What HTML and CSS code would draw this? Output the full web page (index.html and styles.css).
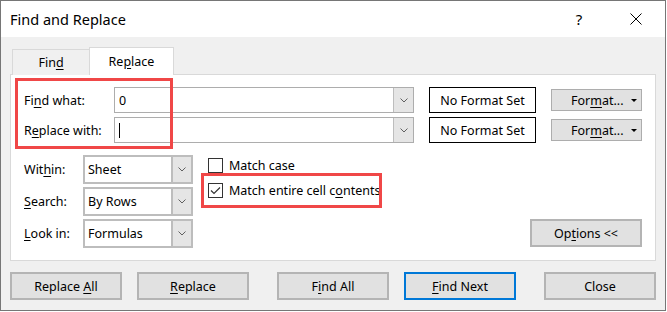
FILE: index.html
```html
<!DOCTYPE html>
<html>
<head>
<meta charset="utf-8">
<title>Find and Replace</title>
<link rel="stylesheet" href="styles.css">
</head>
<body>
<div class="window">
  <div class="titlebar">
    <span class="title">Find and Replace</span>
    <span class="help">?</span>
    <svg class="close-x" width="12" height="12" viewBox="0 0 12 12"><path d="M0.5 0.5 L11.5 11.5 M11.5 0.5 L0.5 11.5" stroke="#000" stroke-width="1" fill="none"/></svg>
  </div>
  <div class="content">
    <div class="tabs">
      <div class="tab"><span>Fin<u>d</u></span></div>
      <div class="tab active"><span>Re<u>p</u>lace</span></div>
    </div>
    <div class="panel">
      <div class="top-grid">
        <div class="label">Fi<u>n</u>d what:</div>
        <div class="field"><span class="val">0</span><span class="drop"><svg width="8" height="5" viewBox="0 0 8 5"><path d="M0.5 0.5 L4 4 L7.5 0.5" stroke="#606060" stroke-width="1" fill="none"/></svg></span></div>
        <div class="nfs">No Format Set</div>
        <div class="fmt"><span>For<u>m</u>at...</span><span class="tri"></span></div>

        <div class="label">R<u>e</u>place with:</div>
        <div class="field"><span class="val"><span class="caret"></span></span><span class="drop"><svg width="8" height="5" viewBox="0 0 8 5"><path d="M0.5 0.5 L4 4 L7.5 0.5" stroke="#606060" stroke-width="1" fill="none"/></svg></span></div>
        <div class="nfs">No Format Set</div>
        <div class="fmt"><span>For<u>m</u>at...</span><span class="tri"></span></div>
      </div>
      <div class="lower">
        <div class="sel-grid">
          <div class="label">Wit<u>h</u>in:</div>
          <div class="combo"><span class="val">Sheet</span><span class="drop"><svg width="8" height="5" viewBox="0 0 8 5"><path d="M0.5 0.5 L4 4 L7.5 0.5" stroke="#606060" stroke-width="1" fill="none"/></svg></span></div>
          <div class="label"><u>S</u>earch:</div>
          <div class="combo"><span class="val">By Rows</span><span class="drop"><svg width="8" height="5" viewBox="0 0 8 5"><path d="M0.5 0.5 L4 4 L7.5 0.5" stroke="#606060" stroke-width="1" fill="none"/></svg></span></div>
          <div class="label"><u>L</u>ook in:</div>
          <div class="combo"><span class="val">Formulas</span><span class="drop"><svg width="8" height="5" viewBox="0 0 8 5"><path d="M0.5 0.5 L4 4 L7.5 0.5" stroke="#606060" stroke-width="1" fill="none"/></svg></span></div>
        </div>
        <div class="checks">
          <div class="check"><span class="box"></span><span>Match case</span></div>
          <div class="check"><span class="box"><svg width="13" height="13" viewBox="0 0 13 13"><path d="M2 6.5 L5 9.5 L11 3.5" stroke="#333" stroke-width="1.2" fill="none"/></svg></span><span>Match entire cell c<u>o</u>ntents</span></div>
        </div>
        <div class="btn options"><span>Op<u>t</u>ions &lt;&lt;</span></div>
      </div>
    </div>
    <div class="buttons">
      <div class="btn"><span>Replace <u>A</u>ll</span></div>
      <div class="btn"><span><u>R</u>eplace</span></div>
      <div class="btn wide-gap"><span>F<u>i</u>nd All</span></div>
      <div class="btn default"><span><u>F</u>ind Next</span></div>
      <div class="btn wide-gap"><span>Close</span></div>
    </div>
  </div>
  <div class="annot annot-find"></div>
  <div class="annot annot-match"></div>
</div>
</body>
</html>
```

FILE: styles.css
```css
* { box-sizing: border-box; }
html, body { margin: 0; padding: 0; background: #fff; }
body {
  font-family: "Noto Sans", "Open Sans", sans-serif;
  font-size: 12.5px;
  color: #000;
}
u { text-underline-offset: 2px; text-decoration-thickness: 1px; }

.window {
  position: relative;
  width: 666px;
  height: 311px;
  border: 1px solid #767676;
  background: #f0f0f0;
  display: flex;
  flex-direction: column;
}

.titlebar {
  height: 36px;
  background: #fff;
  display: flex;
  align-items: center;
  padding-left: 9px;
}
.title { flex: 1; font-size: 14.5px; }
.help { width: 10px; text-align: center; font-size: 15px; margin-right: 46px; }
.close-x { margin-right: 23px; }

.content {
  flex: 1;
  padding: 10px 0 0 9px;
}

.tabs {
  display: flex;
  align-items: flex-end;
  height: 28px;
  margin-left: 2px;
  margin-bottom: -1px;
}
.tab {
  width: 77px;
  height: 26px;
  border: 1px solid #d9d9d9;
  border-bottom: none;
  border-right: none;
  background: #f0f0f0;
  display: flex;
  align-items: center;
  justify-content: center;
}
.tab.active {
  width: 85px;
  height: 28px;
  background: #fff;
  border-right: 1px solid #d9d9d9;
  position: relative;
  z-index: 1;
}

.panel {
  width: 646px;
  height: 187px;
  border: 1px solid #d9d9d9;
  background: #fff;
  padding: 12px 13px 0 13px;
}

.label { white-space: nowrap; }

.top-grid {
  display: grid;
  grid-template-columns: 75px 300px 107px 91px;
  grid-auto-rows: 26px;
  column-gap: 15px;
  row-gap: 4px;
  align-items: center;
}

.field, .combo {
  display: flex;
  background: #fff;
}
.field {
  height: 26px;
  border: 1px solid #adadad;
}
.combo {
  height: 29px;
  border: 2px solid #bdbdbd;
}
.val {
  flex: 1;
  display: flex;
  align-items: center;
  padding-left: 4px;
}
.combo .val { padding-left: 3px; }
.drop {
  width: 20px;
  background: #e5e5e5;
  border-left: 1px solid #bdbdbd;
  display: flex;
  align-items: center;
  justify-content: center;
}
.combo .drop { border-left-width: 2px; }
.caret {
  width: 1px;
  height: 15px;
  background: #000;
}

.nfs {
  height: 26px;
  border: 1px solid #000;
  display: flex;
  align-items: center;
  justify-content: center;
  background: #fff;
}
.fmt {
  height: 22px;
  background: #e1e1e1;
  border: 1px solid #adadad;
  display: flex;
  align-items: center;
  padding-left: 19px;
}
.tri {
  margin-left: auto;
  margin-right: 4px;
  width: 0;
  height: 0;
  border-left: 3px solid transparent;
  border-right: 3px solid transparent;
  border-top: 3px solid #000;
}

.lower {
  display: flex;
  margin-top: 12px;
}
.sel-grid {
  display: grid;
  grid-template-columns: 59px 110px;
  grid-auto-rows: 29px;
  row-gap: 3px;
  align-items: center;
}

.checks {
  margin-left: 15px;
  padding-top: 3px;
  display: flex;
  flex-direction: column;
  gap: 10px;
}
.check {
  display: flex;
  align-items: center;
  height: 15px;
  gap: 6px;
}
.box {
  width: 15px;
  height: 15px;
  border: 1px solid #333;
  background: #fff;
  display: flex;
}

.btn {
  width: 112px;
  height: 28px;
  background: #e1e1e1;
  border: 2px solid #b4b4b4;
  display: flex;
  align-items: center;
  justify-content: center;
}
.btn.default { border-color: #0078d7; }
.options {
  margin-left: auto;
  align-self: flex-end;
  margin-bottom: 1px;
}

.buttons {
  display: flex;
  gap: 15px;
  margin-top: 11px;
}
.buttons .wide-gap { margin-left: 13px; }

.annot {
  position: absolute;
  border: 3px solid #f04747;
}
.annot-find { left: 14px; top: 77px; width: 158px; height: 71px; }
.annot-match { left: 200px; top: 172px; width: 181px; height: 35px; }
```
